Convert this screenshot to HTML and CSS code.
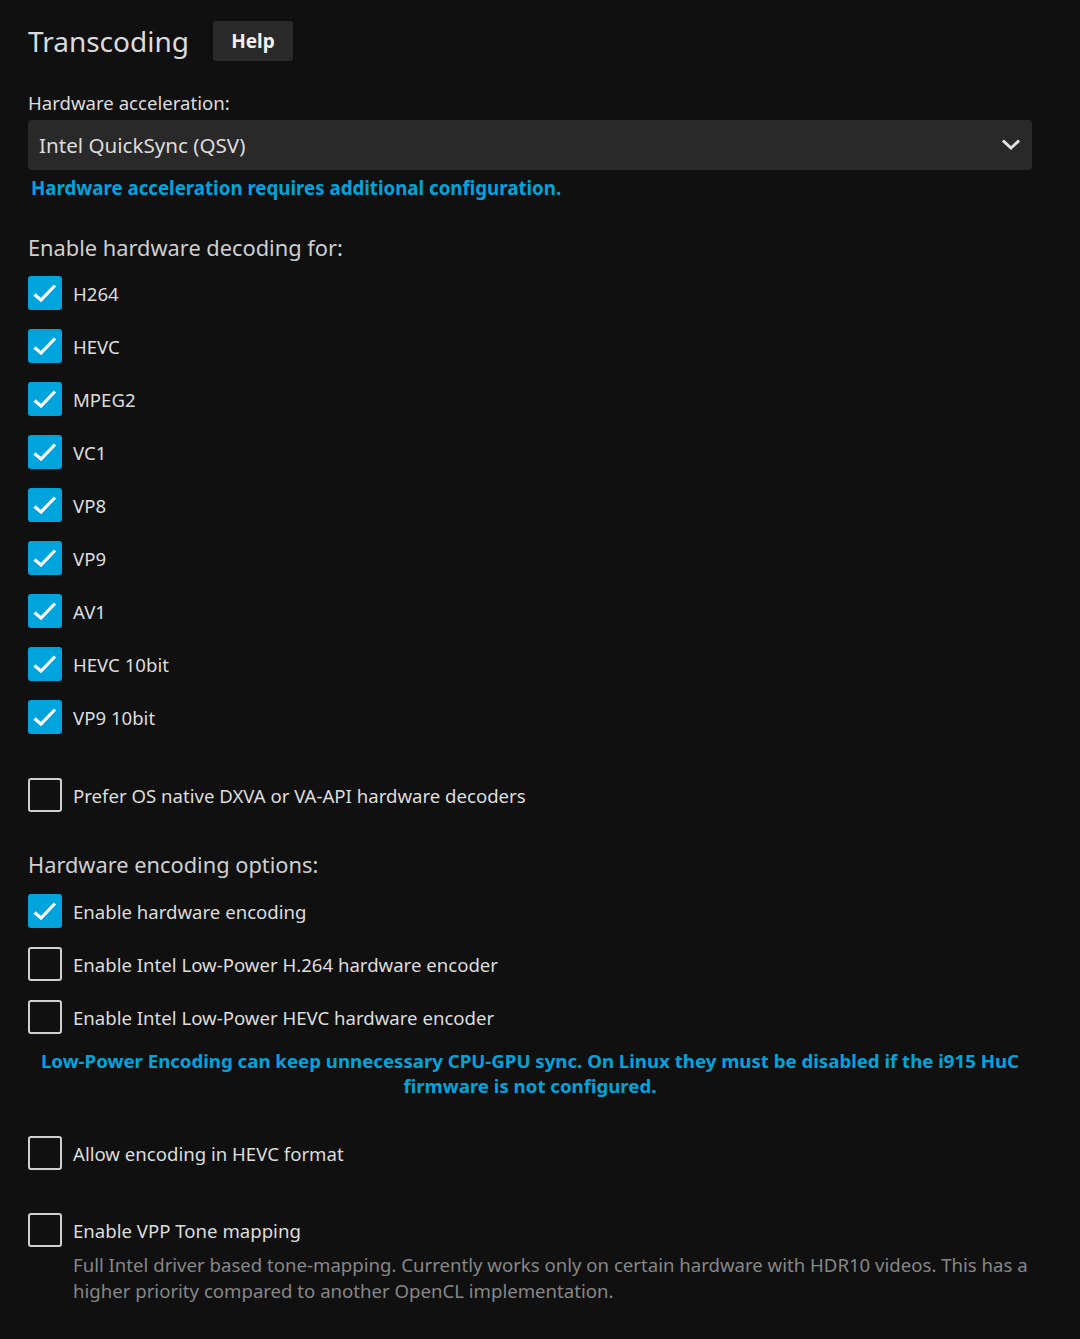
FILE: index.html
```html
<!DOCTYPE html>
<html lang="en">
<head>
<meta charset="utf-8">
<title>Transcoding</title>
<link rel="stylesheet" href="styles.css">
</head>
<body>
<div class="page">
  <div class="header">
    <h2 class="title">Transcoding</h2>
    <a class="help-btn">Help</a>
  </div>

  <label class="field-label">Hardware acceleration:</label>
  <div class="select">
    <span class="select-value">Intel QuickSync (QSV)</span>
    <svg class="chevron" width="18" height="12" viewBox="0 0 18 12"><path d="M2 2.5 L9 9 L16 2.5" fill="none" stroke="#e0e0e0" stroke-width="3" stroke-linecap="square"/></svg>
  </div>
  <a class="config-link">Hardware acceleration requires additional configuration.</a>

  <h3 class="section-title first">Enable hardware decoding for:</h3>
  <div class="checklist">
    <div class="row"><span class="box checked"><svg viewBox="0 0 34 34"><path d="M6.5 18.5 L13 24 L27 9.5" fill="none" stroke="#fff" stroke-width="3.2"/></svg></span><span class="row-label">H264</span></div>
    <div class="row"><span class="box checked"><svg viewBox="0 0 34 34"><path d="M6.5 18.5 L13 24 L27 9.5" fill="none" stroke="#fff" stroke-width="3.2"/></svg></span><span class="row-label">HEVC</span></div>
    <div class="row"><span class="box checked"><svg viewBox="0 0 34 34"><path d="M6.5 18.5 L13 24 L27 9.5" fill="none" stroke="#fff" stroke-width="3.2"/></svg></span><span class="row-label">MPEG2</span></div>
    <div class="row"><span class="box checked"><svg viewBox="0 0 34 34"><path d="M6.5 18.5 L13 24 L27 9.5" fill="none" stroke="#fff" stroke-width="3.2"/></svg></span><span class="row-label">VC1</span></div>
    <div class="row"><span class="box checked"><svg viewBox="0 0 34 34"><path d="M6.5 18.5 L13 24 L27 9.5" fill="none" stroke="#fff" stroke-width="3.2"/></svg></span><span class="row-label">VP8</span></div>
    <div class="row"><span class="box checked"><svg viewBox="0 0 34 34"><path d="M6.5 18.5 L13 24 L27 9.5" fill="none" stroke="#fff" stroke-width="3.2"/></svg></span><span class="row-label">VP9</span></div>
    <div class="row"><span class="box checked"><svg viewBox="0 0 34 34"><path d="M6.5 18.5 L13 24 L27 9.5" fill="none" stroke="#fff" stroke-width="3.2"/></svg></span><span class="row-label">AV1</span></div>
    <div class="row"><span class="box checked"><svg viewBox="0 0 34 34"><path d="M6.5 18.5 L13 24 L27 9.5" fill="none" stroke="#fff" stroke-width="3.2"/></svg></span><span class="row-label">HEVC 10bit</span></div>
    <div class="row"><span class="box checked"><svg viewBox="0 0 34 34"><path d="M6.5 18.5 L13 24 L27 9.5" fill="none" stroke="#fff" stroke-width="3.2"/></svg></span><span class="row-label">VP9 10bit</span></div>
  </div>

  <div class="row single prefer"><span class="box"></span><span class="row-label">Prefer OS native DXVA or VA-API hardware decoders</span></div>

  <h3 class="section-title second">Hardware encoding options:</h3>
  <div class="checklist">
    <div class="row"><span class="box checked"><svg viewBox="0 0 34 34"><path d="M6.5 18.5 L13 24 L27 9.5" fill="none" stroke="#fff" stroke-width="3.2"/></svg></span><span class="row-label">Enable hardware encoding</span></div>
    <div class="row"><span class="box"></span><span class="row-label">Enable Intel Low-Power H.264 hardware encoder</span></div>
    <div class="row"><span class="box"></span><span class="row-label">Enable Intel Low-Power HEVC hardware encoder</span></div>
  </div>
  <p class="notice">Low-Power Encoding can keep unnecessary CPU-GPU sync. On Linux they must be disabled if the i915 HuC firmware is not configured.</p>

  <div class="row single hevc"><span class="box"></span><span class="row-label">Allow encoding in HEVC format</span></div>

  <div class="row single vpp"><span class="box"></span><span class="row-label">Enable VPP Tone mapping</span></div>
  <p class="description">Full Intel driver based tone-mapping. Currently works only on certain hardware with HDR10 videos. This has a higher priority compared to another OpenCL implementation.</p>
</div>
</body>
</html>
```

FILE: styles.css
```css
html, body {
  margin: 0;
  padding: 0;
  background: #101010;
}

body {
  font-family: "Noto Sans", "Open Sans", sans-serif;
  color: #dddddd;
}

.page {
  width: 1004px;
  padding: 21px 0 0 28px;
  display: flex;
  flex-direction: column;
  align-items: flex-start;
}

.header {
  display: flex;
  align-items: center;
  gap: 24px;
  height: 40px;
}

.title {
  margin: 0;
  font-size: 28px;
  font-weight: 400;
  line-height: 40px;
  color: #dcdcdc;
}

.help-btn {
  display: flex;
  align-items: center;
  justify-content: center;
  width: 80px;
  height: 40px;
  background: #292929;
  border-radius: 3px;
  font-weight: 700;
  font-size: 19px;
  color: #f0f0f0;
}

.field-label {
  margin-top: 30px;
  font-size: 18.6px;
  line-height: 24px;
  color: #dddddd;
}

.select {
  margin-top: 5px;
  width: 1004px;
  height: 50px;
  box-sizing: border-box;
  background: #292929;
  border-radius: 4px;
  display: flex;
  align-items: center;
  justify-content: space-between;
  padding: 0 12px 0 11px;
}

.select-value {
  font-size: 20.6px;
  color: #dddddd;
}

.chevron {
  display: block;
}

.config-link {
  margin-top: 6px;
  margin-left: 3px;
  font-size: 18.7px;
  line-height: 24px;
  font-weight: 700;
  color: #00a4dc;
}

.section-title {
  margin: 0;
  font-size: 21.8px;
  font-weight: 400;
  line-height: 30px;
  color: #cfcfcf;
}

.section-title.first {
  margin-top: 33px;
}

.section-title.second {
  margin-top: 38px;
}

.checklist {
  display: flex;
  flex-direction: column;
  gap: 19px;
  margin-top: 13px;
}

.section-title.second + .checklist {
  margin-top: 14px;
}

.row {
  display: flex;
  align-items: center;
  gap: 11px;
  height: 34px;
}

.box {
  width: 34px;
  height: 34px;
  box-sizing: border-box;
  border: 2px solid #d0d0d0;
  border-radius: 3px;
  flex: none;
}

.box.checked {
  background: #00a4dc;
  border: none;
}

.box svg {
  display: block;
  width: 34px;
  height: 34px;
}

.row-label {
  font-size: 18.6px;
  color: #dddddd;
}

.prefer {
  margin-top: 44px;
}

.notice {
  margin: 14px 0 0 0;
  width: 1004px;
  text-align: center;
  font-size: 18.65px;
  line-height: 25px;
  font-weight: 700;
  color: #00a4dc;
}

.hevc {
  margin-top: 38px;
}

.vpp {
  margin-top: 43px;
}

.description {
  margin: 5px 0 0 45px;
  width: 960px;
  font-size: 18.6px;
  line-height: 26px;
  color: #878787;
}
```
